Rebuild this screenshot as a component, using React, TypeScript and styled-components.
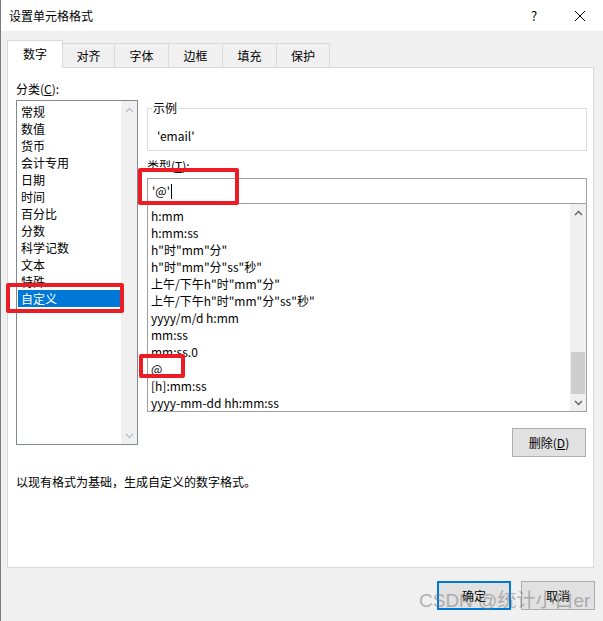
import React from "react";
import styled, { createGlobalStyle } from "styled-components";

const Global = createGlobalStyle`
  html, body { margin: 0; padding: 0; background: #f0f0f0; }
  * { box-sizing: border-box; }
`;

const FONT = `"Microsoft YaHei UI", "Noto Sans CJK SC", "Noto Sans", sans-serif`;

const Window = styled.div`
  position: relative;
  width: 603px;
  height: 621px;
  background: #f0f0f0;
  border-left: 1px solid #7a7a7a;
  font-family: ${FONT};
  font-size: 12px;
  color: #000;
  display: flex;
  flex-direction: column;
  overflow: hidden;
`;

const TitleBar = styled.div`
  height: 31px;
  background: #fff;
  display: flex;
  align-items: center;
  padding-left: 8px;
`;

const Title = styled.div`
  flex: 1;
  line-height: 16px;
`;

const CaptionButton = styled.div`
  width: 46px;
  height: 31px;
  display: flex;
  align-items: center;
  justify-content: center;
  font-size: 13px;
`;

const Body = styled.div`
  padding: 9px 8px 0 6px;
  display: flex;
  flex-direction: column;
`;

const TabRow = styled.div`
  display: flex;
  align-items: flex-end;
  height: 28px;
  margin-bottom: -1px;
  position: relative;
  z-index: 1;
`;

const Tab = styled.div<{ $w: number; $active?: boolean }>`
  width: ${(p) => p.$w}px;
  height: ${(p) => (p.$active ? 28 : 25)}px;
  margin-left: ${(p) => (p.$active ? 0 : -1)}px;
  border: 1px solid #d9d9d9;
  border-bottom: ${(p) => (p.$active ? "none" : "1px solid #d9d9d9")};
  background: ${(p) => (p.$active ? "#fff" : "#f0f0f0")};
  display: flex;
  align-items: center;
  justify-content: center;
  padding-bottom: ${(p) => (p.$active ? 2 : 0)}px;
  line-height: 16px;
  &:first-child { margin-left: 0; }
`;

const Panel = styled.div`
  width: 587px;
  height: 501px;
  background: #fff;
  border: 1px solid #d9d9d9;
  padding: 13px 6px 0 8px;
  display: flex;
  flex-direction: column;
`;

const Columns = styled.div`
  display: grid;
  grid-template-columns: 122px 440px;
  column-gap: 9px;
  align-items: start;
`;

const Col = styled.div`
  display: flex;
  flex-direction: column;
`;

const Label = styled.div<{ $mb?: number }>`
  line-height: 16px;
  margin-bottom: ${(p) => p.$mb ?? 0}px;
`;

const U = styled.span`
  text-decoration: underline;
  text-underline-offset: 1px;
`;

const ListBox = styled.div<{ $h: number }>`
  height: ${(p) => p.$h}px;
  border: 1px solid #828790;
  background: #fff;
  display: flex;
`;

const Items = styled.div<{ $pl: number; $pt: number }>`
  flex: 1;
  padding: ${(p) => p.$pt}px 1px 0 ${(p) => p.$pl}px;
  overflow: hidden;
`;

const Item = styled.div<{ $sel?: boolean; $pad?: number }>`
  height: 17px;
  line-height: 17px;
  white-space: nowrap;
  padding-left: ${(p) => p.$pad ?? 0}px;
  background: ${(p) => (p.$sel ? "#0078d7" : "transparent")};
  color: ${(p) => (p.$sel ? "#fff" : "#000")};
`;

const ScrollBar = styled.div`
  width: 16px;
  background: #f0f0f0;
  display: flex;
  flex-direction: column;
`;

const ArrowBtn = styled.div`
  height: 17px;
  display: flex;
  align-items: center;
  justify-content: center;
`;

const Track = styled.div`
  flex: 1;
  display: flex;
  flex-direction: column;
  justify-content: flex-end;
`;

const Thumb = styled.div`
  height: 42px;
  background: #cdcdcd;
  margin: 0 1px;
`;

const Group = styled.div`
  position: relative;
  margin-top: 27px;
  height: 43px;
  border: 1px solid #dcdcdc;
  padding: 19px 0 0 9px;
  line-height: 16px;
`;

const Legend = styled.span`
  position: absolute;
  top: -9px;
  left: 4px;
  padding: 0 1px;
  background: #fff;
  line-height: 16px;
`;

const TypeLabel = styled(Label)`
  margin-top: 7px;
`;

const Input = styled.div`
  height: 26px;
  border: 1px solid #a0a0a0;
  display: flex;
  align-items: center;
  padding-left: 4px;
  line-height: 16px;
`;

const Caret = styled.span`
  display: inline-block;
  width: 1px;
  height: 15px;
  background: #000;
  margin-left: 1px;
`;

const FormatList = styled(ListBox)`
  margin-top: -1px;
  border-color: #a0a0a0;
`;

const ButtonRow = styled.div`
  display: flex;
  justify-content: flex-end;
  margin-top: 16px;
  padding-right: 1px;
`;

const Button = styled.div<{ $primary?: boolean }>`
  width: 74px;
  height: 29px;
  background: #e1e1e1;
  border: ${(p) => (p.$primary ? "2px solid #0078d7" : "1px solid #adadad")};
  display: flex;
  align-items: center;
  justify-content: center;
  line-height: 16px;
`;

const Description = styled.div`
  margin-top: 17px;
  line-height: 16px;
`;

const Footer = styled.div`
  display: flex;
  justify-content: flex-end;
  gap: 10px;
  padding: 13px 0 0 0;
`;

const Mark = styled.div<{ $l: number; $t: number; $w: number; $h: number }>`
  position: absolute;
  left: ${(p) => p.$l}px;
  top: ${(p) => p.$t}px;
  width: ${(p) => p.$w}px;
  height: ${(p) => p.$h}px;
  border: 4px solid #ed1c24;
  border-radius: 2px;
  z-index: 5;
  pointer-events: none;
`;

const Watermark = styled.div`
  position: absolute;
  left: 418px;
  top: 589px;
  font-family: "Liberation Sans", "Noto Sans CJK SC", sans-serif;
  font-size: 19px;
  line-height: 24px;
  color: rgba(120, 120, 120, 0.55);
  white-space: nowrap;
  z-index: 6;
  pointer-events: none;
`;

const Chevron = ({ up, color }: { up?: boolean; color: string }) => (
  <svg width="9" height="6" viewBox="0 0 9 6">
    <path
      d={up ? "M1 5 L4.5 1.5 L8 5" : "M1 1 L4.5 4.5 L8 1"}
      fill="none"
      stroke={color}
      strokeWidth="1.4"
    />
  </svg>
);

const tabs = [
  { t: "数字", w: 56 },
  { t: "对齐", w: 53 },
  { t: "字体", w: 55 },
  { t: "边框", w: 55 },
  { t: "填充", w: 55 },
  { t: "保护", w: 54 },
];

const categories = [
  "常规",
  "数值",
  "货币",
  "会计专用",
  "日期",
  "时间",
  "百分比",
  "分数",
  "科学记数",
  "文本",
  "特殊",
  "自定义",
];

const formats = [
  "h:mm",
  "h:mm:ss",
  'h"时"mm"分"',
  'h"时"mm"分"ss"秒"',
  '上午/下午h"时"mm"分"',
  '上午/下午h"时"mm"分"ss"秒"',
  "yyyy/m/d h:mm",
  "mm:ss",
  "mm:ss.0",
  "@",
  "[h]:mm:ss",
  "yyyy-mm-dd hh:mm:ss",
];

export default function App() {
  return (
    <>
      <Global />
      <Window>
        <TitleBar>
          <Title>设置单元格格式</Title>
          <CaptionButton>?</CaptionButton>
          <CaptionButton>
            <svg width="12" height="12" viewBox="0 0 12 12">
              <path d="M1 1 L11 11 M11 1 L1 11" stroke="#000" strokeWidth="1" />
            </svg>
          </CaptionButton>
        </TitleBar>
        <Body>
          <TabRow>
            {tabs.map((t, i) => (
              <Tab key={t.t} $w={t.w} $active={i === 0}>
                {t.t}
              </Tab>
            ))}
          </TabRow>
          <Panel>
            <Columns>
              <Col>
                <Label $mb={3}>
                  分类(<U>C</U>):
                </Label>
                <ListBox $h={345}>
                  <Items $pl={1} $pt={2}>
                    {categories.map((c, i) => (
                      <Item key={c} $sel={i === 11} $pad={3}>
                        {c}
                      </Item>
                    ))}
                  </Items>
                  <ScrollBar>
                    <ArrowBtn>
                      <Chevron up color="#c0c0c0" />
                    </ArrowBtn>
                    <Track />
                    <ArrowBtn>
                      <Chevron color="#c0c0c0" />
                    </ArrowBtn>
                  </ScrollBar>
                </ListBox>
              </Col>
              <Col>
                <Group>
                  <Legend>示例</Legend>
                  'email'
                </Group>
                <TypeLabel $mb={4}>
                  类型(<U>T</U>):
                </TypeLabel>
                <Input>
                  '@'
                  <Caret />
                </Input>
                <FormatList $h={209}>
                  <Items $pl={3} $pt={3}>
                    {formats.map((f) => (
                      <Item key={f}>{f}</Item>
                    ))}
                  </Items>
                  <ScrollBar>
                    <ArrowBtn>
                      <Chevron up color="#606060" />
                    </ArrowBtn>
                    <Track>
                      <Thumb />
                    </Track>
                    <ArrowBtn>
                      <Chevron color="#606060" />
                    </ArrowBtn>
                  </ScrollBar>
                </FormatList>
                <ButtonRow>
                  <Button>
                    删除(<U>D</U>)
                  </Button>
                </ButtonRow>
              </Col>
            </Columns>
            <Description>以现有格式为基础，生成自定义的数字格式。</Description>
          </Panel>
          <Footer>
            <Button $primary>确定</Button>
            <Button>取消</Button>
          </Footer>
        </Body>
        <Mark $l={137} $t={168} $w={101} $h={37} />
        <Mark $l={5} $t={283} $w={118} $h={30} />
        <Mark $l={138} $t={354} $w={46} $h={24} />
        <Watermark>CSDN @统计小白er</Watermark>
      </Window>
    </>
  );
}
